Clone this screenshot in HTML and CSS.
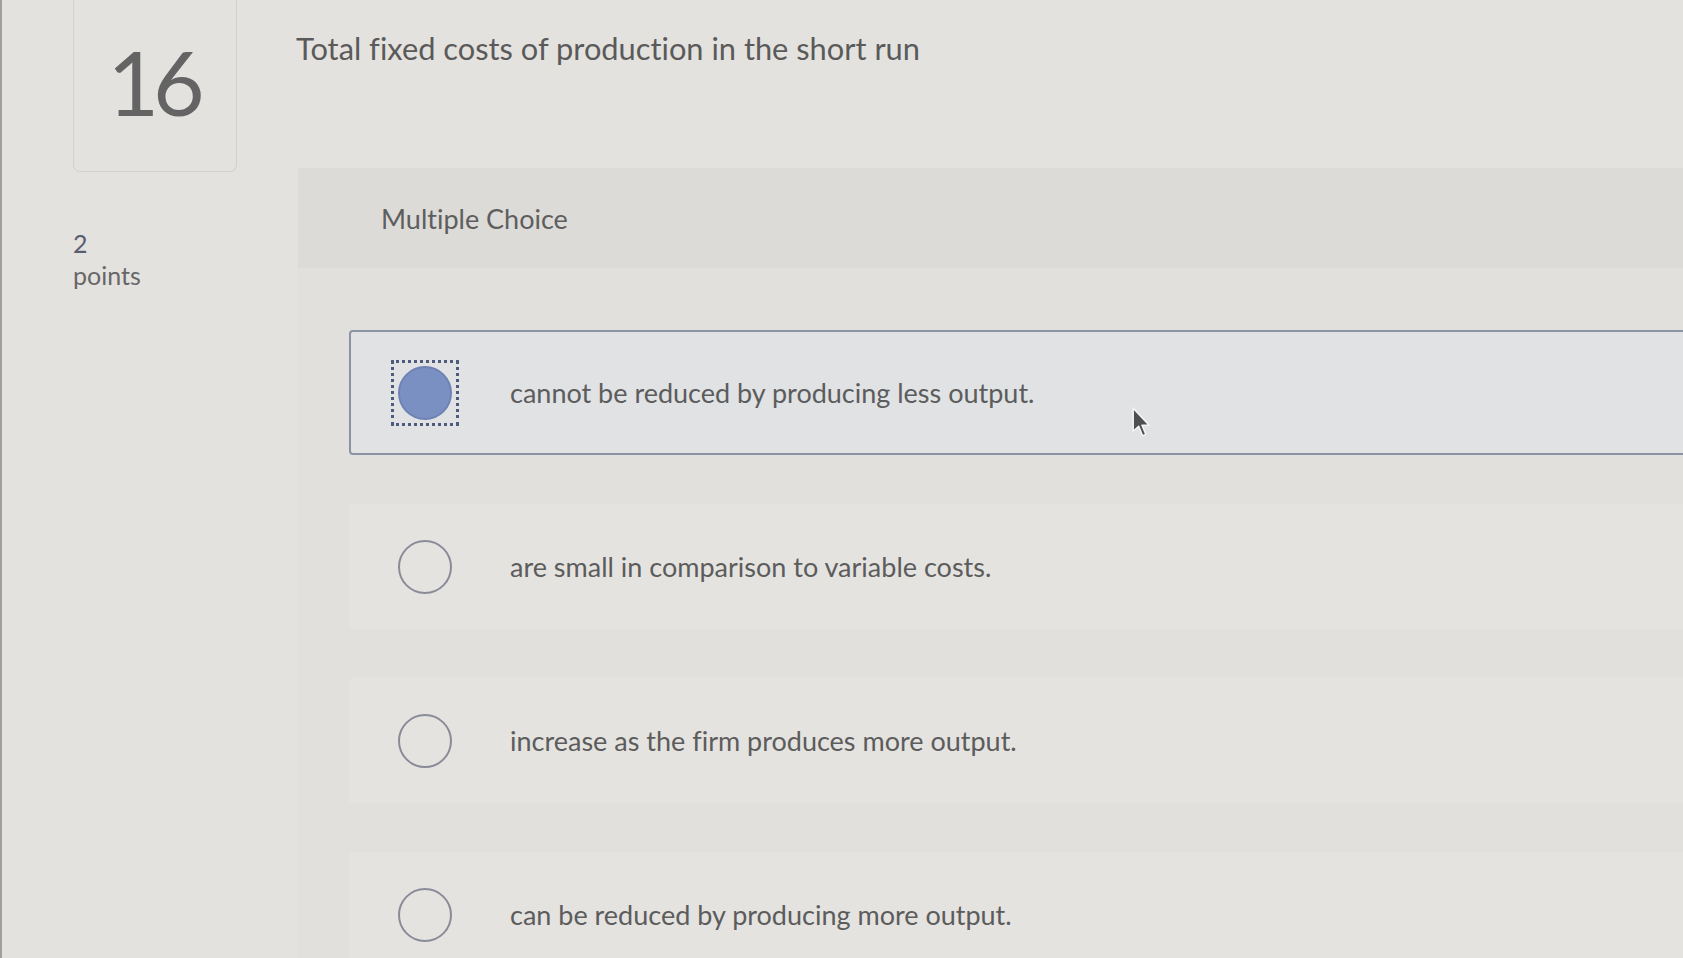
FILE: index.html
```html
<!DOCTYPE html>
<html>
<head>
<meta charset="utf-8">
<link rel="stylesheet" href="styles.css">
</head>
<body>
<div class="page">
  <aside class="side">
    <div class="qnum">16</div>
    <div class="pts">
      <div class="pts-val">2</div>
      <div class="pts-label">points</div>
    </div>
  </aside>
  <main class="main">
    <h1 class="title">Total fixed costs of production in the short run</h1>
    <section class="panel">
      <div class="panel-head">Multiple Choice</div>
      <div class="options">
        <div class="option selected">
          <span class="focus"><span class="radio filled"></span></span>
          <span class="opt-text">cannot be reduced by producing less output.</span>
          <svg class="cursor" width="20" height="32" viewBox="0 0 18 29"><path d="M1 1 L1 22 L6 17.5 L9.5 26 L12.5 24.8 L9 16.5 L15.5 16.5 Z" fill="#4f4f4f" stroke="#f4f4f4" stroke-width="1.4" stroke-linejoin="round"/></svg>
        </div>
        <div class="option">
          <span class="focus blank"><span class="radio"></span></span>
          <span class="opt-text">are small in comparison to variable costs.</span>
        </div>
        <div class="option">
          <span class="focus blank"><span class="radio"></span></span>
          <span class="opt-text">increase as the firm produces more output.</span>
        </div>
        <div class="option">
          <span class="focus blank"><span class="radio"></span></span>
          <span class="opt-text">can be reduced by producing more output.</span>
        </div>
      </div>
    </section>
  </main>
</div>
</body>
</html>
```

FILE: styles.css
```css
html, body {
  margin: 0;
  padding: 0;
  height: 100%;
}
body {
  background: #e4e2de;
  font-family: "Lato", "Open Sans", sans-serif;
  font-variant-ligatures: none;
  color: #5f5f5f;
  overflow: hidden;
  border-left: 2px solid #a09f9c;
  box-sizing: border-box;
}
.page {
  display: grid;
  grid-template-columns: 294px 1fr;
  height: 958px;
}
.side {
  padding-left: 71px;
}
.qnum {
  width: 164px;
  height: 172px;
  box-sizing: border-box;
  border: 1px solid #d3d1cd;
  border-top: none;
  border-radius: 0 0 7px 7px;
  font-size: 89px;
  line-height: 1;
  color: #646464;
  text-align: center;
  padding-top: 37px;
  letter-spacing: -6px;
  text-indent: -4px;
}
.pts {
  margin-top: 55px;
  font-size: 25px;
  line-height: 32px;
}
.pts-val {
  color: #5a5e70;
  font-size: 25px;
}
.pts-label {
  color: #676767;
}
.main {
  display: flex;
  flex-direction: column;
}
.title {
  margin: 0;
  padding-top: 31px;
  height: 168px;
  box-sizing: border-box;
  font-weight: 400;
  font-size: 30.8px;
  line-height: 36px;
  color: #5a5a5a;
  white-space: nowrap;
}
.panel {
  margin-left: 2px;
  flex: 1;
  background: #e1e0dd;
}
.panel-head {
  height: 100px;
  box-sizing: border-box;
  background: #dcdbd8;
  padding: 34px 0 0 83px;
  font-size: 27px;
  line-height: 34px;
  color: #5e5e5e;
}
.options {
  padding: 62px 0 0 51px;
  display: flex;
  flex-direction: column;
  gap: 49px;
}
.option {
  position: relative;
  height: 125px;
  box-sizing: border-box;
  margin-right: -40px;
  background: #e4e3e0;
  display: flex;
  align-items: center;
  padding-left: 40px;
  border: 2px solid transparent;
  border-radius: 4px;
}
.option.selected {
  background: #e0e2e4;
  border-color: #8c93a4;
}
.focus {
  width: 68px;
  height: 66px;
  box-sizing: border-box;
  border: 3px dotted #4e5b7c;
  display: flex;
  align-items: center;
  justify-content: center;
}
.focus.blank {
  border-color: transparent;
}
.radio {
  width: 54px;
  height: 54px;
  box-sizing: border-box;
  border-radius: 50%;
  border: 2px solid #8a8b98;
}
.radio.filled {
  background: #7b90c2;
  border-color: #6e82b4;
}
.opt-text {
  margin-left: 51px;
  font-size: 27px;
  line-height: 34px;
  color: #5c5c5c;
  white-space: nowrap;
}
.cursor {
  position: absolute;
  left: 781px;
  top: 75px;
}
```
